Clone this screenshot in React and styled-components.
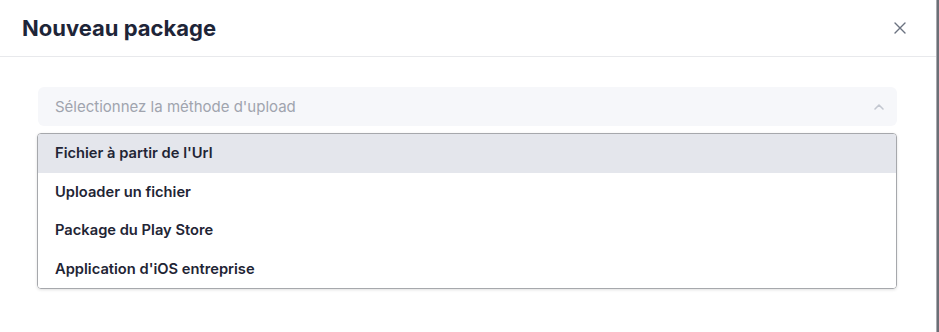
import React, { useState } from "react";
import styled, { createGlobalStyle } from "styled-components";

const GlobalStyle = createGlobalStyle`
  body {
    margin: 0;
    background: #6b6f76;
    font-family: Inter, "Noto Sans", sans-serif;
  }
`;

const options = [
  "Fichier à partir de l'Url",
  "Uploader un fichier",
  "Package du Play Store",
  "Application d'iOS entreprise",
];

const Modal = styled.div`
  width: 936px;
  height: 332px;
  background: #ffffff;
  border-right: 1px solid #a9abb0;
  box-sizing: content-box;
`;

const Header = styled.div`
  height: 57px;
  display: flex;
  align-items: center;
  justify-content: space-between;
  padding: 0 30px 0 22px;
  border-bottom: 1px solid #e8e9ec;
  box-sizing: border-box;
`;

const Title = styled.h2`
  margin: 0;
  font-family: Inter, "Noto Sans", sans-serif;
  font-size: 22px;
  font-weight: 700;
  color: #1e2538;
  padding-bottom: 1px;
`;

const CloseButton = styled.button`
  border: none;
  background: none;
  padding: 0;
  display: flex;
  color: #6b7280;
  cursor: pointer;
`;

const Body = styled.div`
  padding: 30px 39px 0 38px;
`;

const SelectBox = styled.div`
  height: 39px;
  background: #f6f7fa;
  border-radius: 6px;
  display: flex;
  align-items: center;
  justify-content: space-between;
  padding: 0 12px 0 17px;
  font-size: 15px;
  color: #a0a4ae;
`;

const Menu = styled.ul`
  list-style: none;
  margin: 7px 0 0 -1px;
  padding: 0;
  border: 1px solid #a6a8ac;
  border-radius: 4px;
  box-shadow: 0 1px 3px rgba(0, 0, 0, 0.12);
  overflow: hidden;
`;

const Item = styled.li`
  height: 38.5px;
  display: flex;
  align-items: center;
  padding-left: 17px;
  font-size: 14.7px;
  font-weight: 600;
  color: #1f2535;
  background: ${(p) => (p.$active ? "#e4e6ec" : "#ffffff")};
  cursor: pointer;
`;

export default function App() {
  const [active, setActive] = useState(0);
  return (
    <>
      <GlobalStyle />
      <Modal>
        <Header>
          <Title>Nouveau package</Title>
          <CloseButton aria-label="Fermer">
            <svg width="12" height="12" viewBox="0 0 12 12" fill="none">
              <path d="M1 1l10 10M11 1L1 11" stroke="currentColor" strokeWidth="1.4" strokeLinecap="round" />
            </svg>
          </CloseButton>
        </Header>
        <Body>
          <SelectBox>
            <span>Sélectionnez la méthode d'upload</span>
            <svg width="12" height="8" viewBox="0 0 12 8" fill="none">
              <path d="M2 6l4-4 4 4" stroke="#c3c7d0" strokeWidth="1.6" strokeLinecap="round" strokeLinejoin="round" />
            </svg>
          </SelectBox>
          <Menu>
            {options.map((o, i) => (
              <Item key={o} $active={i === active} onMouseEnter={() => setActive(i)}>
                {o}
              </Item>
            ))}
          </Menu>
        </Body>
      </Modal>
    </>
  );
}
